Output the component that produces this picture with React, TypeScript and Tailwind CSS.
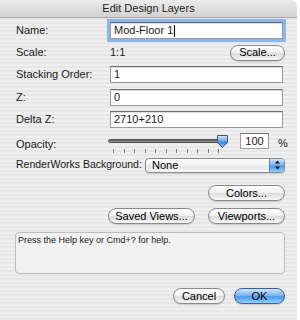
import React from "react";

const stripes =
  "bg-[repeating-linear-gradient(to_bottom,#efefef_0px,#efefef_2px,#e7e7e7_2px,#e7e7e7_4px)]";

const Field = ({ value, focus = false }: { value: string; focus?: boolean }) => (
  <div
    className={`w-[173px] h-[17px] bg-white border border-[#9b9b9b] border-t-[#6e6e6e] shadow-[inset_0_1px_1px_rgba(0,0,0,0.15)] flex items-center pl-[3px] text-[11px] text-[#1a1a1a] ${
      focus ? "outline outline-[3px] outline-[#8db7ea]" : ""
    }`}
  >
    {value}
    {focus && <span className="w-px h-[12px] bg-black ml-px" />}
  </div>
);

const Pill = ({ label, w, blue = false }: { label: string; w: string; blue?: boolean }) => (
  <div
    className={`${w} h-[16px] rounded-full border flex items-center justify-center text-[11px] leading-none text-black ${
      blue
        ? "border-[#3a5f99] bg-[linear-gradient(to_bottom,#cfe6fd_0%,#7eb6f1_45%,#4f98ea_55%,#8fd0fb_100%)]"
        : "border-[#8a8a8a] bg-[linear-gradient(to_bottom,#ffffff_0%,#f1f1f1_45%,#dcdcdc_55%,#f7f7f7_100%)]"
    } shadow-[0_1px_1px_rgba(0,0,0,0.15)]`}
  >
    {label}
  </div>
);

const Label = ({ children }: { children: React.ReactNode }) => (
  <div className="w-[94px] shrink-0 whitespace-nowrap text-[11px] text-[#1a1a1a]">{children}</div>
);

export default function App() {
  return (
    <div className="w-[300px] h-[320px] bg-white" style={{ fontFamily: '"Liberation Sans", Arial, sans-serif' }}>
      <div className={`w-[297px] h-[320px] ${stripes} rounded-tr-[6px] overflow-hidden flex flex-col`}>
        {/* title bar */}
        <div className="h-[18px] shrink-0 bg-[linear-gradient(to_bottom,#ececec,#d2d2d2)] border-b border-[#a8a8a8] flex items-center justify-center text-[11px] text-[#222]">
          Edit Design Layers
        </div>

        <div className="pl-[16px] flex flex-col">
          <div className="mt-[4px] flex items-center h-[17px]">
            <Label>Name:</Label>
            <Field value="Mod-Floor 1" focus />
          </div>

          <div className="mt-[5px] flex items-center h-[17px]">
            <Label>Scale:</Label>
            <div className="w-[120px] text-[11px] text-[#1a1a1a]">1:1</div>
            <Pill label="Scale..." w="w-[55px]" />
          </div>

          <div className="mt-[5px] flex items-center h-[17px]">
            <Label>Stacking Order:</Label>
            <Field value="1" />
          </div>

          <div className="mt-[6px] flex items-center h-[17px]">
            <Label>Z:</Label>
            <Field value="0" />
          </div>

          <div className="mt-[5px] flex items-center h-[17px]">
            <Label>Delta Z:</Label>
            <Field value="2710+210" />
          </div>

          <div className="mt-[5px] flex h-[22px]">
            <div className="pt-[3px]">
              <Label>Opacity:</Label>
            </div>
            <div className="w-[124px] -ml-[2px] flex flex-col">
              <div className="relative h-[15px] flex items-center">
                <div className="w-[118px] h-[4px] rounded-full bg-[linear-gradient(to_bottom,#5a5a5a,#9a9a9a)] border border-[#555]" />
                <svg className="absolute left-[108px] top-[1px]" width="13" height="15" viewBox="0 0 13 15">
                  <defs>
                    <linearGradient id="th" x1="0" y1="0" x2="0" y2="1">
                      <stop offset="0" stopColor="#d6ebff" />
                      <stop offset="0.45" stopColor="#6fa9ea" />
                      <stop offset="0.6" stopColor="#3d86e0" />
                      <stop offset="1" stopColor="#9fd2fb" />
                    </linearGradient>
                  </defs>
                  <path d="M1.5 1.5 H11.5 V8.5 L6.5 13.5 L1.5 8.5 Z" fill="url(#th)" stroke="#35598f" strokeWidth="1" strokeLinejoin="round" />
                </svg>
              </div>
              <div className="flex pl-[5px] gap-[9.5px] mt-[1px]">
                {Array.from({ length: 11 }).map((_, i) => (
                  <div key={i} className="w-px h-[4px] bg-[#7a7a7a]" />
                ))}
              </div>
            </div>
            <div className="ml-[8px] w-[29px] h-[16px] bg-white border border-[#9b9b9b] border-t-[#6e6e6e] flex items-center justify-center text-[11px] text-[#1a1a1a]">
              100
            </div>
            <div className="ml-[9px] pt-[2px] text-[11px] text-[#1a1a1a]">%</div>
          </div>

          <div className="mt-[2px] w-[269px] flex items-center h-[16px]">
            <div className="whitespace-nowrap text-[10.5px] text-[#1a1a1a]">RenderWorks Background:</div>
            <div className="ml-auto w-[140px] h-[15px] rounded-[4px] border border-[#8a8a8a] bg-[linear-gradient(to_bottom,#ffffff,#f0f0f0_50%,#e4e4e4_51%,#f8f8f8)] flex items-center overflow-hidden shadow-[0_1px_1px_rgba(0,0,0,0.15)]">
              <div className="flex-1 pl-[6px] text-[11px] text-black">None</div>
              <div className="w-[15px] h-full border-l border-[#5a7fb8] bg-[linear-gradient(to_bottom,#cfe6fd_0%,#7eb6f1_45%,#4f98ea_55%,#8fd0fb_100%)] flex items-center justify-center">
                <svg width="7" height="10" viewBox="0 0 7 10">
                  <path d="M3.5 0.5 L6 3.5 H1 Z M3.5 9.5 L6 6.5 H1 Z" fill="#111" />
                </svg>
              </div>
            </div>
          </div>

          <div className="mt-[12px] flex justify-end pr-[12px]">
            <Pill label="Colors..." w="w-[77px]" />
          </div>

          <div className="mt-[7px] flex justify-end pr-[12px] gap-[13px]">
            <Pill label="Saved Views..." w="w-[87px]" />
            <Pill label="Viewports..." w="w-[77px]" />
          </div>

          <div className="mt-[8px] w-[270px] h-[42px] -ml-px rounded-[4px] border border-[#bdbdbd] bg-[#f1f1f1] px-[2px] pt-[1px] text-[9px] text-[#222]">
            Press the Help key or Cmd+? for help.
          </div>

          <div className="mt-[14px] flex justify-end pr-[12px] gap-[9px]">
            <Pill label="Cancel" w="w-[52px]" />
            <Pill label="OK" w="w-[51px]" blue />
          </div>
        </div>
      </div>
    </div>
  );
}
